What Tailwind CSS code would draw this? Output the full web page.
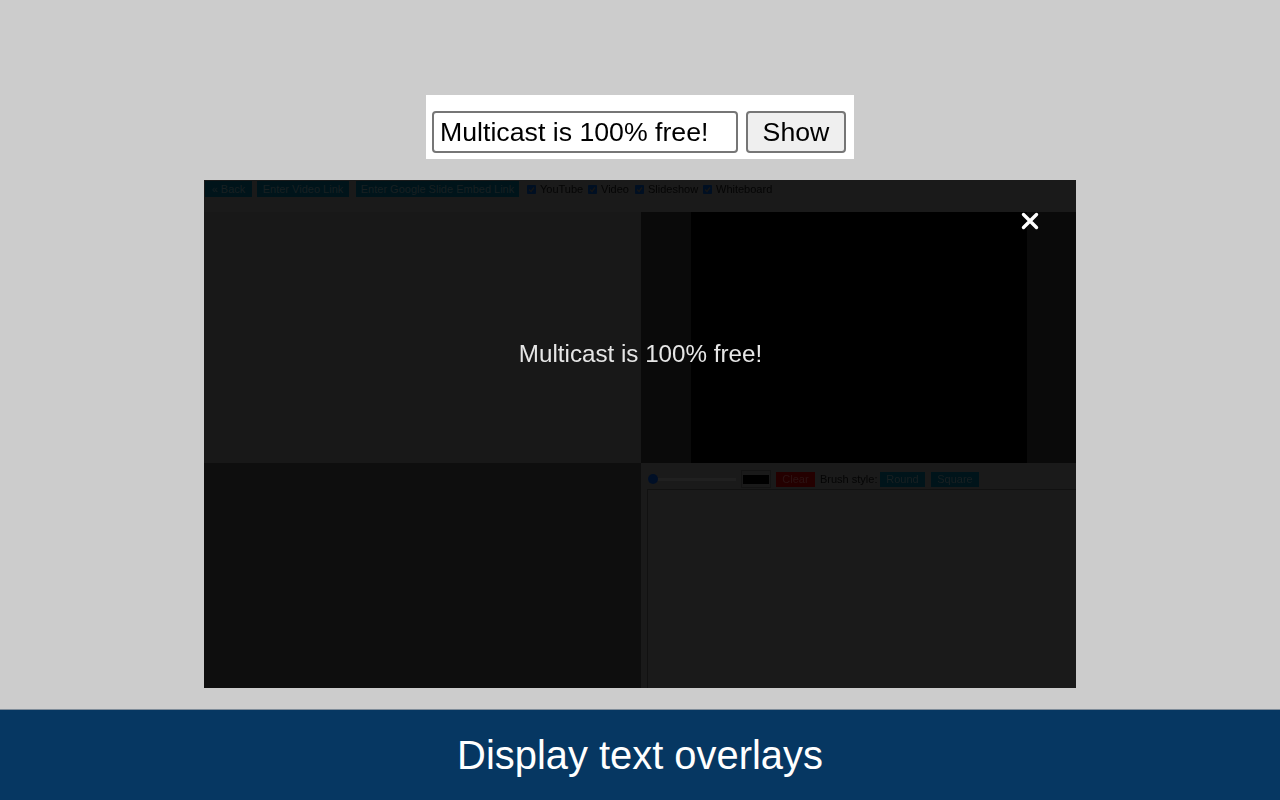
<!DOCTYPE html>
<html lang="en">
<head>
    <meta charset="UTF-8">
    <meta name="viewport" content="width=device-width, initial-scale=1.0">
    <title>Multicast</title>
    <script src="https://cdn.jsdelivr.net/npm/@tailwindcss/browser@4"></script>
</head>
<body class="w-[1280px] h-[800px] overflow-hidden flex flex-col bg-[#cccccc] font-['Liberation_Sans',Arial,sans-serif]">

    <main class="h-[709px] flex flex-col items-center pt-[95px]">
        <!-- text form -->
        <div class="w-[428px] h-[64px] bg-white flex items-center pl-[6px] pr-[8px] pt-[14px] pb-[4px] gap-[8px] blur-[0.3px]">
            <div class="w-[306px] h-[42px] border-2 border-[#767676] rounded-[4px] flex items-center px-[6px] text-[26.7px] text-black whitespace-nowrap">Multicast is 100% free!</div>
            <button class="w-[100px] h-[42px] border-2 border-[#767676] rounded-[4px] bg-[#efefef] text-[26.7px] text-black flex items-center justify-center">Show</button>
        </div>

        <!-- darkened app preview -->
        <div class="relative mt-[21px] w-[872px] h-[508px] bg-[#1a1a1a] overflow-hidden">
            <div class="h-[32px] flex items-start pl-[1px] pt-[1px] text-[11px] text-[#050505] whitespace-nowrap blur-[0.6px]">
                <span class="w-[47px] h-[16px] bg-[#00141a] text-[#182022] text-center leading-[16px]">« Back</span>
                <span class="w-[92px] h-[16px] ml-[5px] bg-[#00141a] text-[#182022] text-center leading-[16px]">Enter Video Link</span>
                <span class="w-[163px] h-[16px] ml-[7px] bg-[#00141a] text-[#182022] text-center leading-[16px]">Enter Google Slide Embed Link</span>
                <div class="flex items-center h-[16px] ml-[8px]">
                    <svg class="w-[9px] h-[9px] mr-[4px]" viewBox="0 0 9 9"><rect width="9" height="9" rx="1" fill="#000f22"/><path d="M2 4.5L4 6.5L7 2.5" fill="none" stroke="#161616" stroke-width="1.4"/></svg>
                    <span class="w-[42px] mr-[6px]">YouTube</span>
                    <svg class="w-[9px] h-[9px] mr-[4px]" viewBox="0 0 9 9"><rect width="9" height="9" rx="1" fill="#000f22"/><path d="M2 4.5L4 6.5L7 2.5" fill="none" stroke="#161616" stroke-width="1.4"/></svg>
                    <span class="w-[28px] mr-[6px]">Video</span>
                    <svg class="w-[9px] h-[9px] mr-[4px]" viewBox="0 0 9 9"><rect width="9" height="9" rx="1" fill="#000f22"/><path d="M2 4.5L4 6.5L7 2.5" fill="none" stroke="#161616" stroke-width="1.4"/></svg>
                    <span class="w-[50px] mr-[5px]">Slideshow</span>
                    <svg class="w-[9px] h-[9px] mr-[4px]" viewBox="0 0 9 9"><rect width="9" height="9" rx="1" fill="#000f22"/><path d="M2 4.5L4 6.5L7 2.5" fill="none" stroke="#161616" stroke-width="1.4"/></svg>
                    <span>Whiteboard</span>
                </div>
            </div>

            <div class="grid grid-cols-[437px_435px] grid-rows-[251px_225px]">
                <div class="bg-[#181818]"></div>
                <div class="bg-[#0a0a0a] pl-[50px]">
                    <div class="w-[336px] h-full bg-black"></div>
                </div>
                <div class="bg-[#0e0e0e]"></div>
                <div class="bg-[#1a1a1a] pl-[6px]">
                    <div class="h-[26px] flex items-center pt-[6px] text-[11px] text-[#050505] whitespace-nowrap blur-[0.6px]">
                        <div class="relative w-[88px] h-[10px] flex items-center ml-[1px]">
                            <div class="w-full h-[3px] bg-[#202020]"></div>
                            <span class="absolute left-0 w-[10px] h-[10px] rounded-full bg-[#000f26]"></span>
                        </div>
                        <div class="w-[30px] h-[18px] ml-[5px] border border-[#141414] flex items-center justify-center"><span class="w-[26px] h-[9px] bg-black"></span></div>
                        <span class="w-[39px] h-[15px] ml-[5px] bg-[#240000] text-[#2c1414] text-center leading-[15px]">Clear</span>
                        <span class="ml-[5px] w-[54px]">Brush style:</span>
                        <span class="w-[45px] h-[15px] ml-[6px] bg-[#00141a] text-[#182022] text-center leading-[15px]">Round</span>
                        <span class="w-[48px] h-[15px] ml-[6px] bg-[#00141a] text-[#182022] text-center leading-[15px]">Square</span>
                    </div>
                    <div class="h-[199px] border-l border-t border-[#111111]"></div>
                </div>
            </div>

            <!-- overlay text + close -->
            <div class="absolute left-[1px] right-0 top-[160px] text-center text-[24.2px] leading-[27px] text-[#e6e6e6] blur-[0.3px]">Multicast is 100% free!</div>
            <svg class="absolute left-[816px] top-[31px] blur-[0.3px]" width="20" height="20" viewBox="0 0 20 20" fill="none" stroke="#ffffff" stroke-width="3.4" stroke-linecap="round">
                <path d="M3.5 3.5L16.5 16.5M16.5 3.5L3.5 16.5"/>
            </svg>
        </div>
    </main>

    <footer class="h-[91px] bg-[#063762] border-t border-[#7f8c99] flex items-center justify-center pt-[2px] text-[39.9px] text-white">Display text overlays</footer>
</body>
</html>
